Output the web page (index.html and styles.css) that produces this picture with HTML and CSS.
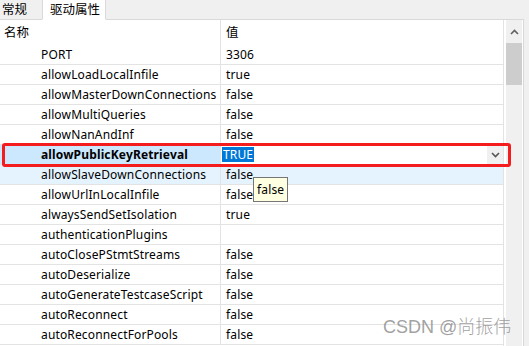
FILE: index.html
```html
<!DOCTYPE html>
<html>
<head>
<meta charset="utf-8">
<link rel="stylesheet" href="styles.css">
</head>
<body>
<div class="tabs">
  <div class="tab first">常规</div>
  <div class="tab active">驱动属性</div>
  <div class="tab-rest"></div>
</div>
<div class="panel">
  <div class="grid">
    <div class="row head"><div class="name">名称</div><div class="val">值</div></div>
    <div class="row"><div class="name">PORT</div><div class="val">3306</div></div>
    <div class="row"><div class="name">allowLoadLocalInfile</div><div class="val">true</div></div>
    <div class="row"><div class="name">allowMasterDownConnections</div><div class="val">false</div></div>
    <div class="row"><div class="name">allowMultiQueries</div><div class="val">false</div></div>
    <div class="row"><div class="name">allowNanAndInf</div><div class="val">false</div></div>
    <div class="row selected"><div class="name">allowPublicKeyRetrieval</div><div class="val combo"><span class="sel">TRUE</span><span class="drop"><svg width="9" height="6" viewBox="0 0 9 6"><path d="M1 1 L4.5 4.5 L8 1" fill="none" stroke="#555" stroke-width="1.6"/></svg></span></div></div>
    <div class="row hover"><div class="name">allowSlaveDownConnections</div><div class="val">false</div></div>
    <div class="row"><div class="name">allowUrlInLocalInfile</div><div class="val">false</div></div>
    <div class="row"><div class="name">alwaysSendSetIsolation</div><div class="val">true</div></div>
    <div class="row"><div class="name">authenticationPlugins</div><div class="val"></div></div>
    <div class="row"><div class="name">autoClosePStmtStreams</div><div class="val">false</div></div>
    <div class="row"><div class="name">autoDeserialize</div><div class="val">false</div></div>
    <div class="row"><div class="name">autoGenerateTestcaseScript</div><div class="val">false</div></div>
    <div class="row"><div class="name">autoReconnect</div><div class="val">false</div></div>
    <div class="row"><div class="name">autoReconnectForPools</div><div class="val">false</div></div>
  </div>
  <div class="scroll">
    <div class="arrow"><svg width="9" height="6" viewBox="0 0 9 6"><path d="M1 5 L4.5 1.5 L8 5" fill="none" stroke="#606060" stroke-width="1.6"/></svg></div>
    <div class="thumb"></div>
  </div>
</div>
<div class="redbox"></div>
<div class="tip">false</div>
<div class="wm">CSDN @尚振伟</div>
</body>
</html>
```
FILE: styles.css
```css
html, body {
  margin: 0;
  padding: 0;
}
body {
  width: 529px;
  height: 346px;
  overflow: hidden;
  background: #f0f0f0;
  font-family: "Noto Sans", "Noto Sans CJK SC", sans-serif;
  font-size: 12px;
  letter-spacing: 0.15px;
  color: #000;
  position: relative;
}
.tabs {
  display: flex;
  width: 524px;
  height: 20px;
}
.tab {
  box-sizing: border-box;
  height: 20px;
  line-height: 17px;
  border-bottom: 1px solid #d9d9d9;
  font-family: "Noto Sans CJK SC", sans-serif;
  font-size: 12.5px;
  letter-spacing: 0;
}
.tab.first {
  width: 42px;
  padding-left: 2px;
}
.tab.active {
  width: 64px;
  padding-left: 7px;
  background: #fff;
  border-left: 1px solid #d9d9d9;
  border-right: 1px solid #d9d9d9;
  border-bottom-color: #fff;
}
.tab-rest {
  flex: 1;
  border-bottom: 1px solid #d9d9d9;
}
.panel {
  display: flex;
  width: 524px;
  height: 326px;
  box-sizing: border-box;
  background: #fff;
  border-right: 1px solid #d9d9d9;
}
.grid {
  width: 504px;
  box-sizing: border-box;
  border-right: 1px solid #e3e3e3;
}
.row {
  display: flex;
  height: 20px;
  box-sizing: border-box;
  border-bottom: 1px solid #e3e3e3;
  line-height: 19px;
  white-space: nowrap;
}
.row.head {
  height: 25px;
  border-bottom: none;
  line-height: 24px;
  font-family: "Noto Sans CJK SC", sans-serif;
  font-size: 12.5px;
  letter-spacing: 0;
}
.row.head .name {
  padding-left: 4px;
}
.name {
  width: 221px;
  box-sizing: border-box;
  padding-left: 41px;
  border-right: 1px solid #e3e3e3;
  overflow: hidden;
}
.val {
  flex: 1;
  padding-left: 5px;
  overflow: hidden;
}
.row.selected .name {
  background: #cce8ff;
  font-weight: bold;
}
.row.hover {
  background: #e5f3ff;
}
.val.combo {
  display: flex;
  align-items: center;
  padding-left: 1px;
  padding-right: 0;
  background: #fff;
}
.sel {
  background: #0078d7;
  color: #fff;
  line-height: 15px;
  padding: 0 1px 0 1px;
  width: 32px;
  box-sizing: border-box;
}
.drop {
  margin-left: auto;
  width: 16px;
  height: 18px;
  background: #f0f0f0;
  display: flex;
  align-items: center;
  justify-content: center;
}
.scroll {
  width: 16px;
  margin-left: 2px;
  background: #f0f0f0;
  display: flex;
  flex-direction: column;
}
.arrow {
  height: 23px;
  display: flex;
  align-items: center;
  justify-content: center;
}
.thumb {
  height: 42px;
  background: #cdcdcd;
}
.redbox {
  position: absolute;
  left: 2px;
  top: 143px;
  width: 509px;
  height: 24px;
  box-sizing: border-box;
  border: 3px solid #f41c1c;
  border-radius: 3px;
}
.tip {
  position: absolute;
  left: 253px;
  top: 177px;
  width: 35px;
  height: 25px;
  box-sizing: border-box;
  background: #ffffe1;
  border: 1px solid #767676;
  padding-left: 3px;
  line-height: 23px;
}
.wm {
  position: absolute;
  left: 383px;
  top: 316px;
  font-family: "Liberation Sans", "Noto Sans CJK SC", sans-serif;
  font-size: 18px;
  font-weight: 300;
  letter-spacing: 0;
  line-height: 22px;
  color: rgba(130, 130, 130, 0.75);
  white-space: nowrap;
}
```
